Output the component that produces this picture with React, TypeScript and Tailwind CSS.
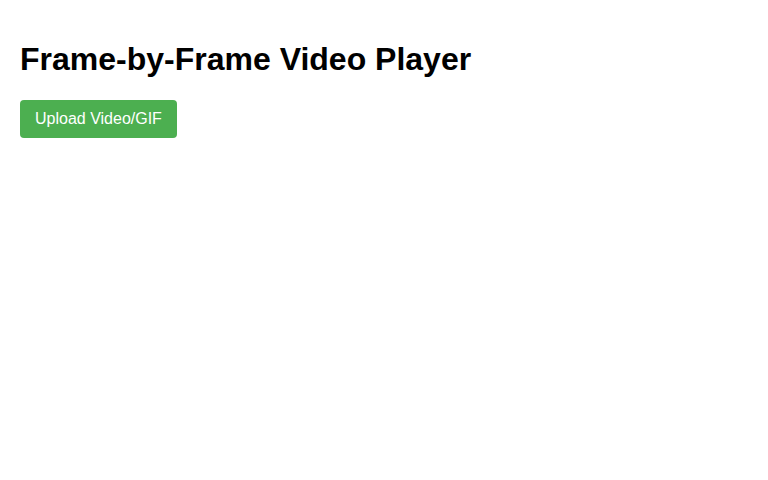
import React from 'react';

const App = () => {
  return (
    <div className="min-h-screen bg-white p-5 text-black" style={{ fontFamily: '"Liberation Sans", Arial, sans-serif' }}>
      <h1 className="my-[21.44px] text-[32px] font-bold leading-[normal]">Frame-by-Frame Video Player</h1>
      <div className="flex">
        <button className="rounded bg-[#4CAF50] px-[15px] py-[10px] text-base leading-[normal] text-white">
          Upload Video/GIF
        </button>
      </div>
    </div>
  );
};

export default App;
